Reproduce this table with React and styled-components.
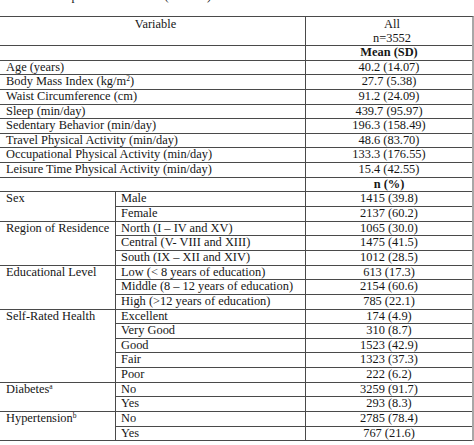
import React from "react";
import styled, { createGlobalStyle } from "styled-components";

const GlobalStyle = createGlobalStyle`
  body {
    margin: 0;
    background: #fff;
    font-family: "Liberation Serif", "Times New Roman", serif;
    color: #161616;
  }
`;

const Page = styled.div`
  width: 474px;
  height: 445px;
  overflow: hidden;
  background: #fff;
`;

const Caption = styled.div`
  height: 16px;
  overflow: hidden;
  padding-left: 6px;
  div {
    margin-top: -10px;
    font-size: 12.5px;
    line-height: 12.5px;
    white-space: nowrap;
  }
`;

const Grid = styled.div`
  display: grid;
  grid-template-columns: 116px 190px 166px;
  grid-template-rows: 29px repeat(27, 14.65px);
  border-top: 1px solid #4a4a4a;
  border-right: 2px solid #a8a8a8;
  font-size: 12.4px;
`;

const Cell = styled.div`
  box-sizing: border-box;
  grid-column: ${p => p.$col || "auto"};
  grid-row: ${p => (p.$rows ? `span ${p.$rows}` : "auto")};
  border-bottom: 1px solid #4a4a4a;
  border-right: ${p => (p.$divider ? "1px solid #4a4a4a" : "none")};
  display: flex;
  align-items: ${p => (p.$top ? "flex-start" : "center")};
  justify-content: ${p => (p.$center ? "center" : "flex-start")};
  padding-left: ${p => (p.$center ? "0" : p.$pad || "6px")};
  font-weight: ${p => (p.$bold ? "bold" : "normal")};
  line-height: 13.65px;
  white-space: nowrap;
`;

const HeadCell = styled(Cell)`
  flex-direction: column;
  align-items: center;
  justify-content: flex-start;
  padding-top: 1px;
  line-height: 13.5px;
`;

const Sup = styled.sup`
  font-size: 7.5px;
  line-height: 0;
  vertical-align: 4px;
`;

const continuous = [
  ["Age (years)", "40.2 (14.07)"],
  [<>Body Mass Index (kg/m<Sup>2</Sup>)</>, "27.7 (5.38)"],
  ["Waist Circumference (cm)", "91.2 (24.09)"],
  ["Sleep (min/day)", "439.7 (95.97)"],
  ["Sedentary Behavior (min/day)", "196.3 (158.49)"],
  ["Travel Physical Activity (min/day)", "48.6 (83.70)"],
  ["Occupational Physical Activity (min/day)", "133.3 (176.55)"],
  ["Leisure Time Physical Activity (min/day)", "15.4 (42.55)"],
];

const groups = [
  {
    label: "Sex",
    items: [
      ["Male", "1415 (39.8)"],
      ["Female", "2137 (60.2)"],
    ],
  },
  {
    label: "Region of Residence",
    items: [
      ["North (I \u2013 IV and XV)", "1065 (30.0)"],
      ["Central (V- VIII and XIII)", "1475 (41.5)"],
      ["South (IX \u2013 XII and XIV)", "1012 (28.5)"],
    ],
  },
  {
    label: "Educational Level",
    items: [
      ["Low (< 8 years of education)", "613 (17.3)"],
      ["Middle (8 \u2013 12 years of education)", "2154 (60.6)"],
      ["High (>12 years of education)", "785 (22.1)"],
    ],
  },
  {
    label: "Self-Rated Health",
    items: [
      ["Excellent", "174 (4.9)"],
      ["Very Good", "310 (8.7)"],
      ["Good", "1523 (42.9)"],
      ["Fair", "1323 (37.3)"],
      ["Poor", "222 (6.2)"],
    ],
  },
  {
    label: <>Diabetes<Sup>a</Sup></>,
    items: [
      ["No", "3259 (91.7)"],
      ["Yes", "293 (8.3)"],
    ],
  },
  {
    label: <>Hypertension<Sup>b</Sup></>,
    items: [
      ["No", "2785 (78.4)"],
      ["Yes", "767 (21.6)"],
    ],
  },
];

export default function App() {
  return (
    <Page>
      <GlobalStyle />
      <Caption>
        <div>Table 1. Sample characteristics (n=3552)</div>
      </Caption>
      <Grid>
        <HeadCell $col="span 2" $divider>Variable</HeadCell>
        <HeadCell>
          <span>All</span>
          <span>n=3552</span>
        </HeadCell>

        <Cell $col="span 2" $divider />
        <Cell $center $bold>Mean (SD)</Cell>

        {continuous.map(([label, value], i) => (
          <React.Fragment key={i}>
            <Cell $col="span 2" $divider><span>{label}</span></Cell>
            <Cell $center>{value}</Cell>
          </React.Fragment>
        ))}

        <Cell $col="span 2" $divider />
        <Cell $center $bold>n (%)</Cell>

        {groups.map((g, gi) => (
          <React.Fragment key={gi}>
            <Cell $col="1" $rows={g.items.length} $divider $top>
              <span>{g.label}</span>
            </Cell>
            {g.items.map(([name, value], i) => (
              <React.Fragment key={i}>
                <Cell $col="2" $divider $pad="5px">{name}</Cell>
                <Cell $col="3" $center>{value}</Cell>
              </React.Fragment>
            ))}
          </React.Fragment>
        ))}
      </Grid>
    </Page>
  );
}
